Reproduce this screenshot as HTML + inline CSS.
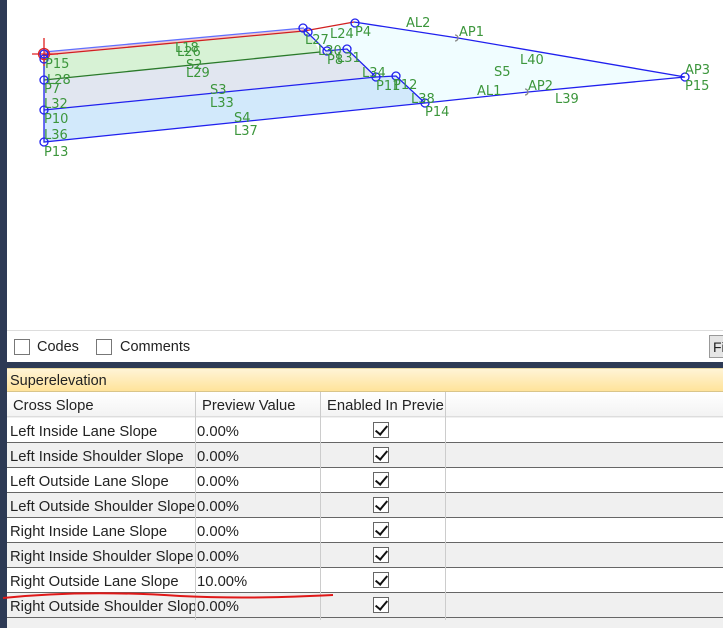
<!DOCTYPE html>
<html><head><meta charset="utf-8"><style>
*{margin:0;padding:0;box-sizing:border-box}
body{width:723px;height:628px;overflow:hidden;background:#2d3a55;font-family:"Liberation Sans",sans-serif;position:relative}
.canvas{position:absolute;left:7px;top:0;width:716px;height:331px;background:#fff;border-bottom:1px solid #ddd}
.opts{position:absolute;left:7px;top:331px;width:716px;height:31px;background:#fff;font-size:14.5px;color:#222}
.cb{position:absolute;top:8px;width:16px;height:16px;border:1px solid #777;background:#fff}
.fi{position:absolute;left:702px;top:4px;width:20px;height:23px;border:1px solid #999;background:#e5e5e5;padding:3px 0 0 3px;font-size:14px}
.hdr{position:absolute;left:7px;top:368px;width:716px;height:24px;background:linear-gradient(#fff4d6,#ffe39a);border-top:1px solid #e8d7a0;border-bottom:1px solid #d9c58a;font-size:14.5px;color:#222;padding:4px 0 0 3px}
.tbl{position:absolute;left:7px;top:392px;width:716px;height:236px;background:#f0f0f0}
.row{position:absolute;left:0;width:716px;height:25px;border-bottom:1px solid #666;font-size:14.8px;color:#222}
.row span{position:absolute;top:6px;white-space:nowrap;overflow:hidden}
.c1{left:3px;width:186px}.c2{left:190px}
.vl{position:absolute;top:0;width:1px;height:228px;background:#ccc}
.ck{position:absolute;left:366px;top:4px;width:16px;height:16px;border:1px solid #666;background:#fff}
.ck:after{content:"";position:absolute;left:4px;top:0px;width:5px;height:10px;border:solid #111;border-width:0 2px 2px 0;transform:rotate(40deg)}
</style></head><body>
<div class="canvas">
<svg width="716" height="331" viewBox="7 0 716 331" xmlns="http://www.w3.org/2000/svg" font-family="DejaVu Sans,sans-serif" font-size="13" fill="#3c963c">
<polygon points="354,22 458,38 685,77 528,92 425,103 396,76 376,77 347,50 326,51 309,33" fill="#f0fdff"/>
<polygon points="44,142 425,103 396,76 376,77 44,110" fill="#d2e9fb"/>
<polygon points="44,110 376,77 347,50 320,52 44,80" fill="#e1e6f0"/>
<polygon points="44,80 320,52 309,33 304,30 44,55" fill="#d7f2d5"/>
<polygon points="44,52 304,28 304,31 44,56" fill="#f4c9cf"/>
<g fill="none" stroke-width="1.3">
<polyline points="44,55 304,31 354,22" stroke="#d02020"/>
<line x1="44" y1="52" x2="304" y2="28" stroke="#6070ff"/>
<line x1="44" y1="80" x2="320" y2="52" stroke="#2a7a2a"/>
<polyline points="354,22 458,38 685,77 528,92 425,103 44,142 44,55" stroke="#2020ee"/>
<polyline points="44,110 376,77 396,76 425,103" stroke="#2020ee"/>
<polyline points="304,29 326,51 347,49 376,77" stroke="#2020ee"/>
<line x1="44" y1="38" x2="44" y2="66" stroke="#e02020"/>
<line x1="32" y1="54" x2="58" y2="54" stroke="#e02020"/>
<circle cx="44" cy="54" r="5.5" stroke="#e02020"/>
<g stroke="#2020ee">
<circle cx="44" cy="54" r="4"/><circle cx="44" cy="59" r="4"/><circle cx="44" cy="80" r="4"/><circle cx="44" cy="110" r="4"/><circle cx="44" cy="142" r="4"/><circle cx="303" cy="28" r="4"/><circle cx="308" cy="32" r="4"/><circle cx="327" cy="51" r="4"/><circle cx="347" cy="49" r="4"/><circle cx="355" cy="23" r="4"/><circle cx="376" cy="77" r="4"/><circle cx="396" cy="76" r="4"/><circle cx="425" cy="103" r="4"/><circle cx="685" cy="77" r="4"/>
</g>
<g stroke="#888"><path d="M455,35 a3,3 0 1 1 0,6"/><path d="M525,89 a3,3 0 1 1 0,6"/></g>
</g>
<text x="45" y="68">P15</text><text x="47" y="84">L28</text><text x="44" y="93">P7</text>
<text x="44" y="108">L32</text><text x="44" y="123">P10</text><text x="44" y="139">L36</text><text x="44" y="156">P13</text>
<text x="175" y="52">L18</text><text x="177" y="56">L26</text><text x="186" y="69">S2</text><text x="186" y="77">L29</text>
<text x="210" y="94">S3</text><text x="210" y="107">L33</text><text x="234" y="122">S4</text><text x="234" y="135">L37</text>
<text x="305" y="44">L27</text><text x="330" y="38">L24</text><text x="355" y="36">P4</text>
<text x="318" y="55">L30</text><text x="327" y="64">P8</text><text x="337" y="62">L31</text>
<text x="362" y="77">L34</text><text x="376" y="90">P11</text><text x="393" y="89">P12</text>
<text x="411" y="103">L38</text><text x="425" y="116">P14</text>
<text x="406" y="27">AL2</text><text x="459" y="36">AP1</text><text x="520" y="64">L40</text><text x="494" y="76">S5</text>
<text x="477" y="95">AL1</text><text x="528" y="90">AP2</text><text x="555" y="103">L39</text>
<text x="685" y="74">AP3</text><text x="685" y="90">P15</text>
</svg>
</div>
<div class="opts">
<div class="cb" style="left:7px"></div><span style="position:absolute;left:30px;top:8px">Codes</span>
<div class="cb" style="left:89px"></div><span style="position:absolute;left:113px;top:8px">Comments</span>
<div class="fi">Fi</div>
</div>
<div class="hdr">Superelevation</div>
<div class="tbl">
<div class="row" style="top:0;background:linear-gradient(#fff,#f3f3f3);border-bottom:1px solid #ddd"><span class="c1" style="left:6px">Cross Slope</span><span style="left:195px">Preview Value</span><span style="left:320px">Enabled In Previe</span></div>
<div class="row" style="top:26px;background:#fff"><span class="c1">Left Inside Lane Slope</span><span class="c2">0.00%</span><div class="ck"></div></div>
<div class="row" style="top:51px"><span class="c1">Left Inside Shoulder Slope</span><span class="c2">0.00%</span><div class="ck"></div></div>
<div class="row" style="top:76px;background:#fff"><span class="c1">Left Outside Lane Slope</span><span class="c2">0.00%</span><div class="ck"></div></div>
<div class="row" style="top:101px"><span class="c1">Left Outside Shoulder Slope</span><span class="c2">0.00%</span><div class="ck"></div></div>
<div class="row" style="top:126px;background:#fff"><span class="c1">Right Inside Lane Slope</span><span class="c2">0.00%</span><div class="ck"></div></div>
<div class="row" style="top:151px"><span class="c1">Right Inside Shoulder Slope</span><span class="c2">0.00%</span><div class="ck"></div></div>
<div class="row" style="top:176px;background:#fff"><span class="c1">Right Outside Lane Slope</span><span class="c2">10.00%</span><div class="ck"></div></div>
<div class="row" style="top:201px"><span class="c1">Right Outside Shoulder Slope</span><span class="c2">0.00%</span><div class="ck"></div></div>
<div class="vl" style="left:188px"></div><div class="vl" style="left:313px"></div><div class="vl" style="left:438px"></div>
</div>
<svg style="position:absolute;left:0;top:590px" width="340" height="14"><path d="M3,8 C60,2 120,2 180,6 C240,9 290,7 333,5" stroke="#e01818" stroke-width="2" fill="none"/></svg>
</body></html>
